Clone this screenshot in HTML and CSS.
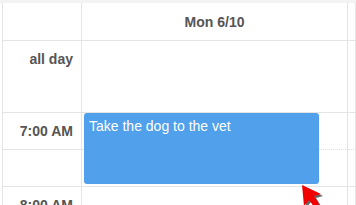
FILE: index.html
```html
<!DOCTYPE html>
<html lang="en">
<head>
    <meta charset="UTF-8">
    <title>Week view</title>
    <link rel="stylesheet" href="styles.css">
</head>
<body>
    <div class="toolbar"></div>
    <div class="calendar">
        <div class="cell axis"></div>
        <div class="cell head">Mon 6/10</div>
        <div class="cell head"></div>

        <div class="cell axis allday-label">all day</div>
        <div class="cell allday"></div>
        <div class="cell allday"></div>

        <div class="cell axis slot-label">7:00 AM</div>
        <div class="cell slot minor day">
            <div class="event">Take the dog to the vet</div>
        </div>
        <div class="cell slot minor"></div>

        <div class="cell axis slot"></div>
        <div class="cell slot"></div>
        <div class="cell slot"></div>

        <div class="cell axis slot-label">8:00 AM</div>
        <div class="cell slot minor"></div>
        <div class="cell slot minor"></div>
    </div>

    <svg class="cursor" width="30" height="30" viewBox="0 0 30 30">
        <polygon points="3,2 22,11 15,13 20,21 16,25 10,17 5,23" fill="#222" opacity="0.7" transform="translate(2,2)"/>
        <polygon points="3,2 22,11 15,13 20,21 16,25 10,17 5,23" fill="#f20000"/>
    </svg>
</body>
</html>
```

FILE: styles.css
```css
body {
    margin: 0;
    width: 356px;
    height: 205px;
    overflow: hidden;
    background: #fff;
    font-family: 'Liberation Sans', Arial, sans-serif;
    position: relative;
}

.toolbar {
    height: 3px;
    background: #f3f3f3;
}

.calendar {
    margin-left: 2px;
    border-left: 1px solid #e4e4e4;
    display: grid;
    grid-template-columns: 79px 266px 1fr;
    grid-template-rows: 38px 72px 37px 37px 37px;
}

.cell {
    box-sizing: border-box;
    border-bottom: 1px solid #e4e4e4;
    border-right: 1px solid #e4e4e4;
}

.head {
    display: flex;
    align-items: center;
    justify-content: center;
    font-weight: bold;
    font-size: 14px;
    color: #555;
    padding-top: 1px;
}

.axis {
    font-weight: bold;
    font-size: 14px;
    color: #555;
    text-align: right;
    padding-right: 8px;
}

.allday-label {
    padding-top: 10px;
}

.slot-label {
    line-height: 36px;
}

.slot.minor {
    border-bottom: 1px dotted #e0e0e0;
}

.axis.slot-label {
    border-bottom: 1px solid #e4e4e4;
}

.day {
    position: relative;
}

.event {
    position: absolute;
    top: 0;
    left: 2px;
    width: 235px;
    height: 71px;
    box-sizing: border-box;
    background: #50a0eb;
    border-radius: 3px;
    color: #fff;
    font-size: 14px;
    padding: 5px 5px;
    line-height: 16px;
}

.cursor {
    position: absolute;
    left: 299px;
    top: 183px;
}
```
